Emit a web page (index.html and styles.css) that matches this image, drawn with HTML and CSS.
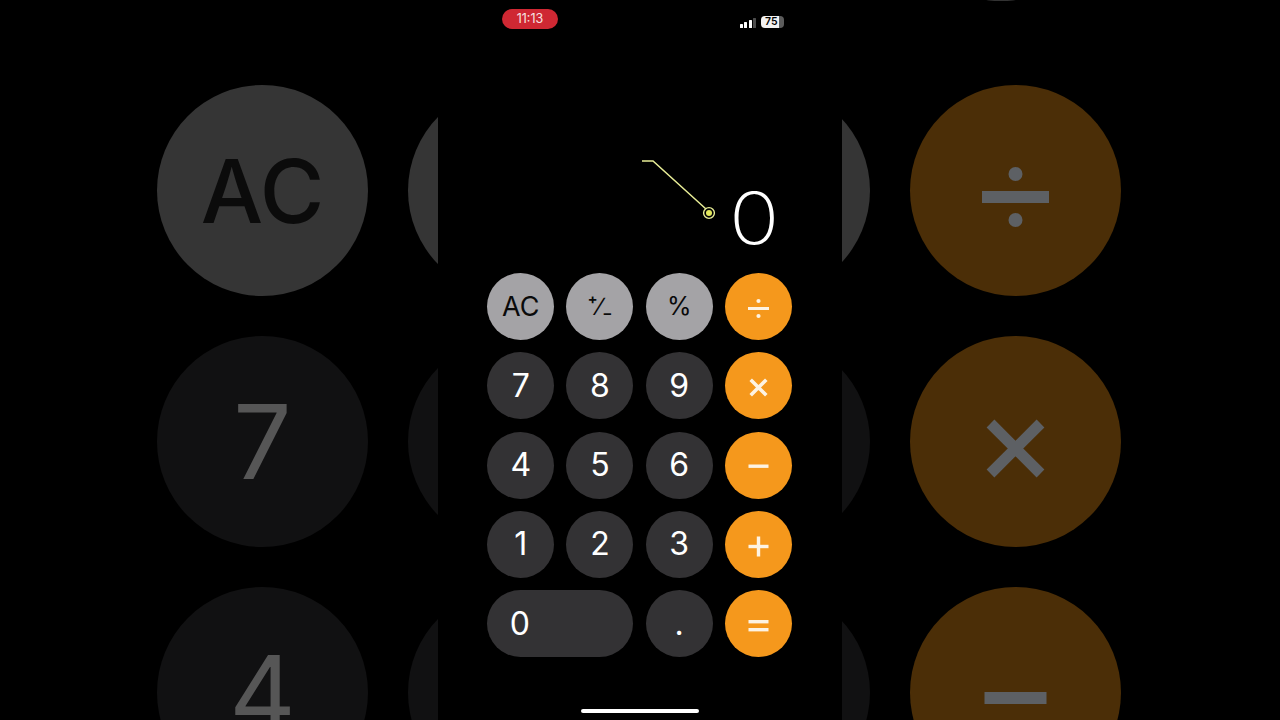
FILE: index.html
```html
<!DOCTYPE html>
<html lang="en">
<head>
<meta charset="utf-8">
<title>Calculator</title>
<link rel="stylesheet" href="styles.css">
</head>
<body>
<div class="stage">
  <div class="glow"></div>
  <div class="backdrop" aria-hidden="true">
    <div class="bd bd-gray">AC</div><div class="bd bd-gray"></div><div class="bd bd-gray"></div><div class="bd bd-op">
      <svg class="bd-sym" viewBox="0 0 67 67"><rect x="0" y="27" width="67" height="12" fill="#5d6064"/><circle cx="33.5" cy="10" r="7" fill="#5d6064"/><circle cx="33.5" cy="56" r="7" fill="#5d6064"/></svg>
    </div>
    <div class="bd bd-dark">7</div><div class="bd bd-dark"></div><div class="bd bd-dark"></div><div class="bd bd-op">
      <svg class="bd-sym" viewBox="0 0 67 67"><path d="M8.5 8.5 58.5 58.5M58.5 8.5 8.5 58.5" stroke="#5d6064" stroke-width="11" fill="none"/></svg>
    </div>
    <div class="bd bd-dark">4</div><div class="bd bd-dark"></div><div class="bd bd-dark"></div><div class="bd bd-op">
      <svg class="bd-sym" viewBox="0 0 67 67"><rect x="2.5" y="26" width="62" height="12" fill="#5d6064"/></svg>
    </div>
  </div>

  <main class="phone">
    <header class="status">
      <div class="rec">11:13</div>
      <div class="indicators">
        <div class="signal"><i class="s1"></i><i class="s2"></i><i class="s3"></i><i class="s4"></i></div>
        <div class="battery"><span class="level">75</span></div>
      </div>
    </header>

    <div class="display">
      <svg class="pointer" viewBox="0 0 80 60" aria-hidden="true">
        <path d="M1 1H12L65 49" fill="none" stroke="#e9ee97" stroke-width="1.5"/>
        <circle cx="68" cy="53" r="5.4" fill="#000" stroke="#e9ee97" stroke-width="1.4"/>
        <circle cx="68" cy="53" r="3" fill="#e4ea5c"/>
      </svg>
      <div class="value">0</div>
    </div>

    <div class="keypad">
      <button class="key fn ac">AC</button>
      <button class="key fn small">⁺∕₋</button>
      <button class="key fn pct">%</button>
      <button class="key op"><svg class="sym" viewBox="0 0 21 21"><rect y="9" width="21" height="3"/><circle cx="10.5" cy="3" r="2.1"/><circle cx="10.5" cy="18" r="2.1"/></svg></button>
      <button class="key num">7</button>
      <button class="key num">8</button>
      <button class="key num">9</button>
      <button class="key op"><svg class="sym" viewBox="0 0 21 21"><path d="M2.7 2.7 18.3 18.3M18.3 2.7 2.7 18.3" stroke="#fdf3e3" stroke-width="3.6" fill="none"/></svg></button>
      <button class="key num">4</button>
      <button class="key num">5</button>
      <button class="key num">6</button>
      <button class="key op"><svg class="sym" viewBox="0 0 21 21"><rect x="0.5" y="7.5" width="20" height="3.4"/></svg></button>
      <button class="key num">1</button>
      <button class="key num">2</button>
      <button class="key num">3</button>
      <button class="key op"><svg class="sym" viewBox="0 0 21 21"><rect x="0.5" y="8.8" width="20" height="3.4"/><rect x="8.8" y="0.5" width="3.4" height="20"/></svg></button>
      <button class="key num zero">0</button>
      <button class="key num dot">.</button>
      <button class="key op"><svg class="sym" viewBox="0 0 21 21"><rect x="0.5" y="5" width="20" height="3.4"/><rect x="0.5" y="13" width="20" height="3.4"/></svg></button>
    </div>

    <div class="home"></div>
  </main>
</div>
</body>
</html>
```
FILE: styles.css
```css
* { box-sizing: border-box; }
html, body { margin: 0; padding: 0; background: #000; }
.stage {
  position: relative;
  width: 1280px;
  height: 720px;
  overflow: hidden;
  background: #000;
  display: flex;
  justify-content: center;
  font-family: Inter, "Liberation Sans", sans-serif;
}
.glow {
  position: absolute;
  top: -3px;
  left: 984px;
  width: 34px;
  height: 4px;
  border-radius: 50%;
  background: #333;
}
.backdrop {
  position: absolute;
  top: 85px;
  left: 157px;
  display: grid;
  grid-template-columns: repeat(4, 211px);
  grid-auto-rows: 211px;
  column-gap: 40px;
  row-gap: 40px;
}
.bd {
  border-radius: 50%;
  display: flex;
  align-items: center;
  justify-content: center;
  line-height: 1;
}
.bd-gray { background: #353535; color: #0b0b0b; font-size: 88px; font-weight: 450; }
.bd-dark { background: #111112; color: #565656; font-size: 103px; }
.bd-op { background: #4b2e07; }
.bd-sym { width: 67px; height: 67px; margin-top: 13px; overflow: visible; }

.phone {
  position: relative;
  width: 404px;
  height: 720px;
  background: #000;
  display: flex;
  flex-direction: column;
}
.status {
  display: flex;
  justify-content: space-between;
  align-items: center;
  height: 38px;
  padding: 0 58px 0 64px;
}
.rec {
  width: 56px;
  height: 20px;
  background: #cf2833;
  border-radius: 10px;
  color: #f6e3e3;
  font-size: 12.5px;
  line-height: 20px;
  text-align: center;
}
.indicators { display: flex; align-items: center; gap: 5px; margin-top: 6px; }
.signal { display: flex; align-items: flex-end; gap: 1.5px; height: 10px; margin-top: 1px; }
.signal i { display: block; width: 3px; background: #fff; border-radius: .5px; }
.signal .s1 { height: 3.5px; }
.signal .s2 { height: 5.5px; }
.signal .s3 { height: 8px; }
.signal .s4 { height: 10px; background: #4c4c4c; }
.battery {
  width: 23px;
  height: 12px;
  border-radius: 4px;
  background: linear-gradient(90deg, #f2f2f2 0 78%, #5c5c5c 78%);
}
.level {
  display: block;
  color: #000;
  font-size: 10.5px;
  font-weight: 600;
  line-height: 12px;
  padding-left: 4px;
}
.display {
  height: 235px;
  display: flex;
  justify-content: flex-end;
  align-items: flex-end;
  padding-right: 63px;
  position: relative;
}
.pointer {
  position: absolute;
  left: 203px;
  top: 122px;
  width: 80px;
  height: 60px;
  overflow: visible;
}
.value {
  color: #fff;
  font-size: 72px;
  font-weight: 250;
  line-height: 76px;
  margin-bottom: 17px;
  transform: scaleX(1.16);
  transform-origin: right center;
}
.keypad {
  margin-left: 49.3px;
  display: grid;
  grid-template-columns: repeat(4, 67px);
  grid-auto-rows: 67px;
  column-gap: 12.2px;
  row-gap: 12.25px;
}
.key {
  border: 0;
  padding: 0;
  margin: 0;
  border-radius: 33.5px;
  font-family: inherit;
  display: flex;
  align-items: center;
  justify-content: center;
  line-height: 1;
}
.num { background: #333234; color: #fff; font-size: 32px; font-weight: 425; }
.fn { background: #a4a3a6; color: #0a0a0a; font-size: 27px; font-weight: 425; }
.pct { font-size: 25px; }
.small { font-size: 25px; }
.op { background: #f5981c; }
.sym { width: 21px; height: 21px; fill: #fdf3e3; margin-top: 4px; }
.zero { grid-column: span 2; justify-content: flex-start; padding-left: 22.5px; }
.home {
  position: absolute;
  left: 143px;
  top: 708.5px;
  width: 118px;
  height: 4.5px;
  border-radius: 2.25px;
  background: #fff;
}
```
